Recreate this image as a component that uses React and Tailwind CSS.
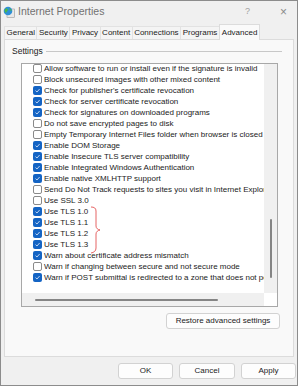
import React from 'react'

const rows = [
  ['Allow software to run or install even if the signature is invalid', false],
  ['Block unsecured images with other mixed content', false],
  ["Check for publisher's certificate revocation", true],
  ['Check for server certificate revocation', true],
  ['Check for signatures on downloaded programs', true],
  ['Do not save encrypted pages to disk', false],
  ['Empty Temporary Internet Files folder when browser is closed', false],
  ['Enable DOM Storage', true],
  ['Enable Insecure TLS server compatibility', true],
  ['Enable Integrated Windows Authentication', true],
  ['Enable native XMLHTTP support', true],
  ['Send Do Not Track requests to sites you visit in Internet Explorer', false],
  ['Use SSL 3.0', false],
  ['Use TLS 1.0', true],
  ['Use TLS 1.1', true],
  ['Use TLS 1.2', true],
  ['Use TLS 1.3', true],
  ['Warn about certificate address mismatch', true],
  ['Warn if changing between secure and not secure mode', false],
  ['Warn if POST submittal is redirected to a zone that does not permit posting', true],
]

const tabs = ['General', 'Security', 'Privacy', 'Content', 'Connections', 'Programs']

const Check = ({ on }) =>
  on ? (
    <span className="w-[9px] h-[9px] shrink-0 rounded-[2px] bg-[#1464c4] flex items-center justify-center">
      <svg width="7" height="7" viewBox="0 0 7 7">
        <path d="M1.5 3.6 L3 5 L5.6 2" fill="none" stroke="#cfe0f7" strokeWidth="0.9" />
      </svg>
    </span>
  ) : (
    <span className="w-[9px] h-[9px] shrink-0 rounded-[2px] bg-white border border-[#8a8a8a]" />
  )

const Button = ({ children, className }) => (
  <div className={`h-[16px] bg-[#fdfdfd] border border-[#d2d2d2] rounded-[3px] flex items-center justify-center text-[#1b1b1b] ${className}`}>
    {children}
  </div>
)

export default function App() {
  return (
    <div className="w-[300px] h-[386px] bg-white" style={{ fontFamily: '"Liberation Sans", Arial, sans-serif' }}>
      <div className="w-[298px] h-[386px] border border-[#8c8c8c] bg-[#f0f0f0] flex flex-col text-[8px]">
        {/* Title bar */}
        <div className="h-[22px] flex items-center shrink-0">
          <svg className="ml-[2px]" width="12" height="12" viewBox="0 0 12 12">
            <rect x="4" y="3" width="7.5" height="8.5" fill="#e8e8e8" stroke="#9a9a9a" strokeWidth="0.6" />
            <circle cx="5" cy="5" r="4.3" fill="#2e8fd6" />
            <path d="M2 3 C3 2, 5 2.5, 5 4 C4.5 5, 3.5 5.5, 3 7 C2 6.5, 1 5, 2 3 Z" fill="#4cb848" />
            <path d="M6 2 C7.5 2.5, 8.5 3.5, 8.6 5 C7.5 5, 6.5 4, 6 2 Z" fill="#4cb848" />
          </svg>
          <span className="ml-[3px] text-[10.5px] text-[#727272]">Internet Properties</span>
          <span className="ml-auto mr-[30px] text-[9px] text-[#a0a0a0]">?</span>
          <span className="mr-[10px] text-[12px] leading-none text-[#8a8a8a]">×</span>
        </div>

        {/* Tabs */}
        <div className="h-[16px] flex items-end pl-[3px] shrink-0">
          {tabs.map((t) => (
            <div key={t} className="h-[13px] px-[1.5px] flex items-center border-t border-l border-[#e2e2e2] bg-[#f4f4f4] text-[8px] text-[#1b1b1b]">
              {t}
            </div>
          ))}
          <div className="h-[16px] px-[2px] flex items-center border-t border-x border-[#dcdcdc] bg-[#fafafa] text-[8px] text-[#1b1b1b] -mb-px relative">
            Advanced
          </div>
        </div>

        {/* Panel */}
        <div className="mx-[3px] h-[318px] shrink-0 border border-[#dcdcdc] bg-[#f9f9f9] flex flex-col">
          <div className="h-[23px] flex items-center pl-[7px] pr-[11px]">
            <span className="text-[8.5px] text-[#1b1b1b]">Settings</span>
            <div className="ml-[3px] flex-1 h-px bg-[#c8c8c8]" />
          </div>

          <div className="ml-[16px] w-[257px] h-[244px] border border-[#a8a8a8] bg-white flex flex-col relative">
            <div className="flex h-[229px]">
              <div className="flex-1 overflow-hidden -mt-px">
                {rows.map(([label, on]) => (
                  <div key={label} className="h-[11px] flex items-center pl-[11px] whitespace-nowrap">
                    <Check on={on} />
                    <span className="ml-[2px] text-[#1b1b1b]">{label}</span>
                  </div>
                ))}
              </div>
              <div className="w-[13px] bg-[#f0f0f0] shrink-0 flex justify-center pt-[155px]">
                <div className="w-[2px] h-[59px] rounded-full bg-[#858585]" />
              </div>
            </div>
            <div className="h-[13px] bg-[#f0f0f0] mr-[13px] flex items-center pl-[13px]">
              <div className="w-[183px] h-[2px] rounded-full bg-[#858585]" />
            </div>

            <svg className="absolute left-[68px] top-[142px]" width="12" height="48" viewBox="0 0 12 48">
              <path
                d="M1 1 C4 1, 6 2, 6 5 L6 20 C6 22.5, 8 23.5, 10 24 C8 24.5, 6 25.5, 6 28 L6 42 C6 45, 4 46.5, 1 47"
                fill="none"
                stroke="#e25252"
                strokeWidth="0.9"
              />
            </svg>
          </div>

          <div className="flex justify-end pr-[13px] mt-[6px]">
            <Button className="w-[114px] h-[15px]">Restore advanced settings</Button>
          </div>
        </div>

        {/* Bottom buttons */}
        <div className="flex justify-end pt-[6px] pr-[1px] gap-[6px]">
          <Button className="w-[55px]">OK</Button>
          <Button className="w-[56px]">Cancel</Button>
          <Button className="w-[55px]">Apply</Button>
        </div>
      </div>
    </div>
  )
}
